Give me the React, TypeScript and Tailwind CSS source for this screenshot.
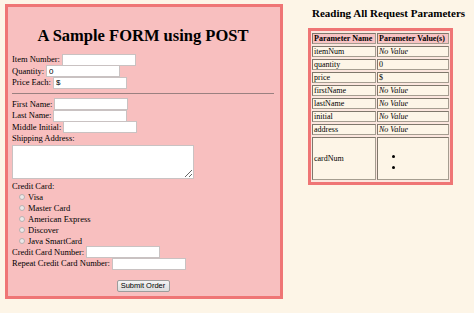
import React from 'react';

const serif = { fontFamily: '"Liberation Serif", "Times New Roman", serif' };

function TextInput({ width, value }: { width: string; value?: string }) {
  return (
    <input
      type="text"
      defaultValue={value}
      className={`${width} h-[12px] bg-white border border-[#c9c2c2] px-[2px] text-[8px] leading-[10px] text-black outline-none`}
      style={{ fontFamily: '"Liberation Sans", Arial, sans-serif' }}
    />
  );
}

function Row({ children }: { children: React.ReactNode }) {
  return <div className="flex items-center h-[11.5px] gap-[2px]">{children}</div>;
}

function Radio({ label }: { label: string }) {
  return (
    <div className="flex items-center h-[11px] pl-[7px] gap-[3px]">
      <span className="w-[6px] h-[6px] rounded-full border border-[#b8b0b0] bg-[#ece8e8]" />
      <span>{label}</span>
    </div>
  );
}

const params: [string, string, boolean][] = [
  ['itemNum', 'No Value', true],
  ['quantity', '0', false],
  ['price', '$', false],
  ['firstName', 'No Value', true],
  ['lastName', 'No Value', true],
  ['initial', 'No Value', true],
  ['address', 'No Value', true],
];

const cell = 'border border-t-[#7f776b] border-l-[#7f776b] border-b-[#a59d90] border-r-[#a59d90] px-[1px]';

export default function App() {
  return (
    <div className="w-[474px] h-[313px] bg-[#fdf5e7] overflow-hidden text-black" style={serif}>
      <div className="flex items-start">
        {/* Order form */}
        <div className="ml-[5px] mt-[4px] w-[278px] h-[295px] border-[3px] border-[#ef7575] bg-[#f8bfbf] pl-[4px] pr-[6px] pt-[17px] text-[8.5px] leading-[11px]">
          <h1 className="text-[16.5px] leading-[24px] font-bold text-center mb-[6px]">
            A Sample FORM using POST
          </h1>

          <Row>
            <span>Item Number:</span>
            <TextInput width="w-[74px]" />
          </Row>
          <Row>
            <span>Quantity:</span>
            <TextInput width="w-[74px]" value="0" />
          </Row>
          <Row>
            <span>Price Each:</span>
            <TextInput width="w-[74px]" value="$" />
          </Row>

          <div className="h-[10px] flex items-center">
            <div className="w-full border-t border-[#9a8080]" />
          </div>

          <Row>
            <span>First Name:</span>
            <TextInput width="w-[74px]" />
          </Row>
          <Row>
            <span>Last Name:</span>
            <TextInput width="w-[74px]" />
          </Row>
          <Row>
            <span>Middle Initial:</span>
            <TextInput width="w-[74px]" />
          </Row>
          <Row>
            <span>Shipping Address:</span>
          </Row>
          <textarea className="block w-[182px] h-[34px] bg-white border border-[#c9c2c2] mt-[0.5px] mb-[1.5px] outline-none" />

          <div className="flex items-center h-[11px]">Credit Card:</div>
          <Radio label="Visa" />
          <Radio label="Master Card" />
          <Radio label="American Express" />
          <Radio label="Discover" />
          <Radio label="Java SmartCard" />
          <Row>
            <span>Credit Card Number:</span>
            <TextInput width="w-[74px]" />
          </Row>
          <Row>
            <span>Repeat Credit Card Number:</span>
            <TextInput width="w-[74px]" />
          </Row>

          <div className="flex justify-center mt-[10px]">
            <button
              className="w-[53px] h-[12px] rounded-[2px] border border-[#9c9c9c] bg-gradient-to-b from-[#f4f4f4] to-[#dcdcdc] text-[7.5px] leading-[10px] text-black"
              style={{ fontFamily: '"Liberation Sans", Arial, sans-serif' }}
            >
              Submit Order
            </button>
          </div>
        </div>

        {/* Request parameters */}
        <div className="ml-[25px] mt-[6px]">
          <h2 className="ml-[4px] text-[11px] leading-[14px] font-bold whitespace-nowrap">
            Reading All Request Parameters
          </h2>
          <table
            className="mt-[8px] w-[145px] table-fixed border-[3px] border-[#ef7575] bg-[#fbe6de] border-separate text-[8px] leading-[9px]"
            style={{ borderSpacing: '1px 2px' }}
          >
            <colgroup>
              <col className="w-[64px]" />
              <col />
            </colgroup>
            <thead>
              <tr>
                <th className={`h-[11px] ${cell} bg-[#f8c3c3] text-left font-bold whitespace-nowrap`}>
                  Parameter Name
                </th>
                <th className={`h-[11px] ${cell} bg-[#f8c3c3] text-left font-bold whitespace-nowrap`}>
                  Parameter Value(s)
                </th>
              </tr>
            </thead>
            <tbody>
              {params.map(([name, value, empty]) => (
                <tr key={name}>
                  <td className={`h-[11px] ${cell} bg-[#fdf5e7]`}>{name}</td>
                  <td className={`h-[11px] ${cell} bg-[#fdf5e7] ${empty ? 'italic' : ''}`}>{value}</td>
                </tr>
              ))}
              <tr>
                <td className={`${cell} bg-[#fdf5e7] align-middle`}>cardNum</td>
                <td className={`${cell} bg-[#fdf5e7] pl-[14px] pt-[17px] pb-[10px]`}>
                  <div className="flex flex-col gap-[8px]">
                    <span className="w-[3px] h-[3px] rounded-full bg-black" />
                    <span className="w-[3px] h-[3px] rounded-full bg-black" />
                  </div>
                </td>
              </tr>
            </tbody>
          </table>
        </div>
      </div>
    </div>
  );
}
